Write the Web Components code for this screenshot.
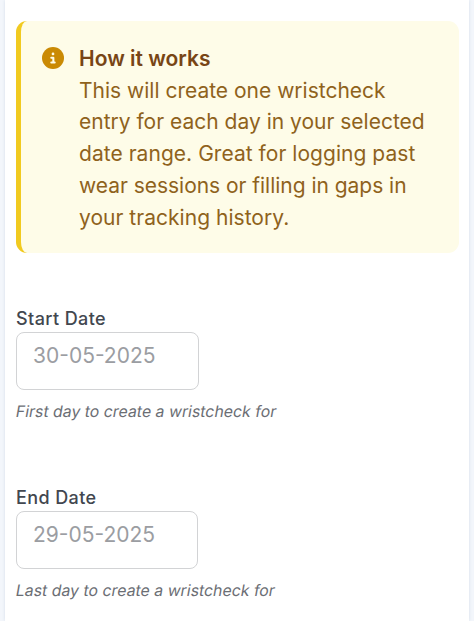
<!DOCTYPE html>
<html lang="en"><head><meta charset="utf-8"><title>Wristcheck dates</title>
<style>html,body{margin:0;height:100%;overflow:hidden;background:#f3f6fb}body{font-family:Inter,sans-serif}</style></head><body>
<form-panel>
<info-callout heading="How it works"><span>This will create one wristcheck</span><span>entry for each day in your selected</span><span style="letter-spacing:.04px">date range. Great for logging past</span><span style="letter-spacing:-.03px">wear sessions or filling in gaps in</span><span style="letter-spacing:.03px">your tracking history.</span></info-callout>
<date-field label="Start Date" value="30-05-2025" hint="First day to create a wristcheck for"></date-field>
<date-field label="End Date" value="29-05-2025" hint="Last day to create a wristcheck for" style="--field-width:182px"></date-field>
</form-panel>
<script>
class FormPanel extends HTMLElement{constructor(){super();this.attachShadow({mode:'open'}).innerHTML=`<style>:host{display:block;box-sizing:border-box;height:621px;margin:0 5px;padding:21px 10.5px 0 11px;background:#fff;box-shadow:0 0 3px #d5deea;overflow:hidden}</style><slot></slot>`}}
class InfoCallout extends HTMLElement{connectedCallback(){this.attachShadow({mode:'open'}).innerHTML=`<style>:host{display:flex;box-sizing:border-box;height:232px;padding:22px 0 0 21px;gap:15px;background:#fefce8;border-left:5px solid #f1ca20;border-radius:11px;color:#784515;font-size:21px;line-height:31.7px}svg{width:22px;height:22px;margin-top:4px;flex:none}h3{margin:0;font-size:21px;font-weight:600;line-height:31.7px}::slotted(span){display:block;white-space:nowrap;color:#8f621c}</style><svg viewBox="0 0 512 512" fill="#ca8a04"><circle cx="256" cy="256" r="256"/><path fill="#fefce8" d="M216 336h24V272H216a24 24 0 0 1 0-48h48a24 24 0 0 1 24 24v88h8a24 24 0 0 1 0 48H216a24 24 0 0 1 0-48zM256 128a32 32 0 1 1 0 64a32 32 0 1 1 0-64z"/></svg><div><h3>${this.getAttribute('heading')}</h3><slot></slot></div>`}}
class DateField extends HTMLElement{connectedCallback(){const a=n=>this.getAttribute(n);this.attachShadow({mode:'open'}).innerHTML=`<style>:host{display:block;height:127px;padding-top:52px}.label{font-size:18px;font-weight:500;line-height:28px;height:27px;letter-spacing:.4px;color:#42474f}.box{box-sizing:border-box;width:var(--field-width,183px);height:58px;border:1.4px solid #d2d3d5;border-radius:8px;padding:8px 0 0 16px;font-size:21px;line-height:30px;color:#9b9da2}.hint{width:max-content;margin-top:10px;font-size:15.8px;line-height:24px;letter-spacing:.025px;transform:skewX(-10deg);color:#6b6e74;white-space:nowrap}</style><div class="label">${a('label')}</div><div class="box">${a('value')}</div><div class="hint">${a('hint')}</div>`}}
customElements.define('form-panel',FormPanel);customElements.define('info-callout',InfoCallout);customElements.define('date-field',DateField);
</script></body></html>
